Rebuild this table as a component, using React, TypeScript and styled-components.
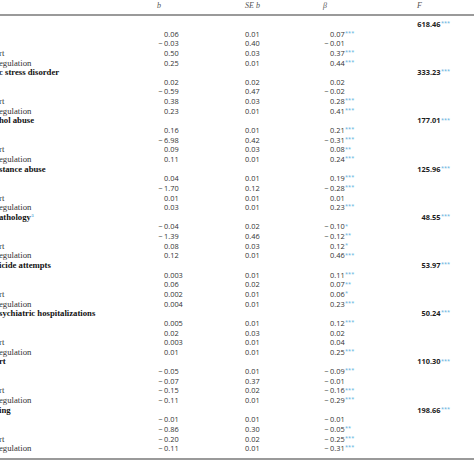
import React from "react";
import styled, { createGlobalStyle } from "styled-components";

const GlobalStyle = createGlobalStyle`
  html, body {
    margin: 0;
    padding: 0;
    background: #ffffff;
  }
  #root {
    width: 474px;
    height: 474px;
    overflow: hidden;
  }
`;

type DataRow = {
  b: string;
  se: string;
  beta: string;
  stars?: string;
};

type Group = {
  label: string;
  sup?: string;
  f: string;
  rows: DataRow[];
};

const groups: Group[] = [
  {
    label: "",
    f: "618.46",
    rows: [
      { b: "0.06", se: "0.01", beta: "0.07", stars: "***" },
      { b: "-0.03", se: "0.40", beta: "-0.01" },
      { b: "0.50", se: "0.03", beta: "0.37", stars: "***" },
      { b: "0.25", se: "0.01", beta: "0.44", stars: "***" },
    ],
  },
  {
    label: "c stress disorder",
    f: "333.23",
    rows: [
      { b: "0.02", se: "0.02", beta: "0.02" },
      { b: "-0.59", se: "0.47", beta: "-0.02" },
      { b: "0.38", se: "0.03", beta: "0.28", stars: "***" },
      { b: "0.23", se: "0.01", beta: "0.41", stars: "***" },
    ],
  },
  {
    label: "hol abuse",
    f: "177.01",
    rows: [
      { b: "0.16", se: "0.01", beta: "0.21", stars: "***" },
      { b: "-6.98", se: "0.42", beta: "-0.31", stars: "***" },
      { b: "0.09", se: "0.03", beta: "0.08", stars: "**" },
      { b: "0.11", se: "0.01", beta: "0.24", stars: "***" },
    ],
  },
  {
    label: "stance abuse",
    f: "125.96",
    rows: [
      { b: "0.04", se: "0.01", beta: "0.19", stars: "***" },
      { b: "-1.70", se: "0.12", beta: "-0.28", stars: "***" },
      { b: "0.01", se: "0.01", beta: "0.01" },
      { b: "0.03", se: "0.01", beta: "0.23", stars: "***" },
    ],
  },
  {
    label: "athology",
    sup: "a",
    f: "48.55",
    rows: [
      { b: "-0.04", se: "0.02", beta: "-0.10", stars: "*" },
      { b: "-1.39", se: "0.46", beta: "-0.12", stars: "**" },
      { b: "0.08", se: "0.03", beta: "0.12", stars: "*" },
      { b: "0.12", se: "0.01", beta: "0.46", stars: "***" },
    ],
  },
  {
    label: "icide attempts",
    f: "53.97",
    rows: [
      { b: "0.003", se: "0.01", beta: "0.11", stars: "***" },
      { b: "0.06", se: "0.02", beta: "0.07", stars: "**" },
      { b: "0.002", se: "0.01", beta: "0.06", stars: "*" },
      { b: "0.004", se: "0.01", beta: "0.23", stars: "***" },
    ],
  },
  {
    label: "sychiatric hospitalizations",
    f: "50.24",
    rows: [
      { b: "0.005", se: "0.01", beta: "0.12", stars: "***" },
      { b: "0.02", se: "0.03", beta: "0.02" },
      { b: "0.003", se: "0.01", beta: "0.04" },
      { b: "0.01", se: "0.01", beta: "0.25", stars: "***" },
    ],
  },
  {
    label: "rt",
    f: "110.30",
    rows: [
      { b: "-0.05", se: "0.01", beta: "-0.09", stars: "***" },
      { b: "-0.07", se: "0.37", beta: "-0.01" },
      { b: "-0.15", se: "0.02", beta: "-0.16", stars: "***" },
      { b: "-0.11", se: "0.01", beta: "-0.29", stars: "***" },
    ],
  },
  {
    label: "ing",
    f: "198.66",
    rows: [
      { b: "-0.01", se: "0.01", beta: "-0.01" },
      { b: "-0.86", se: "0.30", beta: "-0.05", stars: "**" },
      { b: "-0.20", se: "0.02", beta: "-0.25", stars: "***" },
      { b: "-0.11", se: "0.01", beta: "-0.31", stars: "***" },
    ],
  },
];

const subLabels = ["", "", "rt", "egulation"];

const SignedNumber = ({ value, stars }: { value: string; stars?: string }) => {
  const negative = value.startsWith("-");
  return (
    <NumberCell>
      <Sign>{negative ? "\u2212" : ""}</Sign>
      {negative ? value.slice(1) : value}
      {stars && <Stars>{stars}</Stars>}
    </NumberCell>
  );
};

const FValue = ({ value }: { value: string }) => {
  const [whole, frac] = value.split(".");
  return (
    <FCell>
      <FWhole>{whole}</FWhole>.{frac}
      <Stars>***</Stars>
    </FCell>
  );
};

export default function App() {
  return (
    <>
      <GlobalStyle />
      <Table>
        <HeaderRow>
          <span />
          <HeadCell>b</HeadCell>
          <HeadCell>SE b</HeadCell>
          <HeadCell>β</HeadCell>
          <HeadCell $offset={14}>F</HeadCell>
        </HeaderRow>
        <Rule />
        <Body>
          {groups.map((group, gi) => (
            <React.Fragment key={gi}>
              <Row>
                <Label $bold>
                  {group.label}
                  {group.sup && <LabelSup>{group.sup}</LabelSup>}
                </Label>
                <span />
                <span />
                <span />
                <FValue value={group.f} />
              </Row>
              {group.rows.map((row, ri) => (
                <Row key={ri}>
                  <Label>{subLabels[ri]}</Label>
                  <SignedNumber value={row.b} />
                  <PlainNumber>{row.se}</PlainNumber>
                  <SignedNumber value={row.beta} stars={row.stars} />
                  <span />
                </Row>
              ))}
            </React.Fragment>
          ))}
        </Body>
        <Rule />
      </Table>
    </>
  );
}

const Table = styled.div`
  width: 474px;
  display: flex;
  flex-direction: column;
  font-family: "Open Sans", "Noto Sans", sans-serif;
  color: #333333;
`;

const columns = "157px 88px 78px 80px 1fr";

const HeaderRow = styled.div`
  display: grid;
  grid-template-columns: ${columns};
  height: 12px;
  line-height: 12px;
  margin-bottom: 1.5px;
`;

const HeadCell = styled.span<{ $offset?: number }>`
  font-family: "Liberation Serif", "DejaVu Serif", serif;
  font-style: italic;
  font-size: 8px;
  color: #555555;
  padding-left: ${(props) => props.$offset ?? 0}px;
`;

const Rule = styled.div`
  height: 2px;
  width: 100%;
  background: #9a9a9a;
`;

const Body = styled.div`
  display: flex;
  flex-direction: column;
  padding: 4.5px 0 4.3px;
`;

const Row = styled.div`
  display: grid;
  grid-template-columns: ${columns};
  height: 9.65px;
  line-height: 9.65px;
  font-size: 7.4px;
  white-space: nowrap;
`;

const Label = styled.span<{ $bold?: boolean }>`
  font-family: "Liberation Serif", "DejaVu Serif", serif;
  font-size: 8.7px;
  font-weight: ${(props) => (props.$bold ? 700 : 400)};
  color: ${(props) => (props.$bold ? "#111111" : "#333333")};
  margin-left: -1px;
`;

const LabelSup = styled.span`
  font-size: 5.5px;
  font-weight: 400;
  color: #4aa6d6;
  vertical-align: 2.5px;
  line-height: 0;
  margin-left: 0.5px;
`;

const NumberCell = styled.span``;

const Sign = styled.span`
  display: inline-block;
  width: 7px;
  text-align: right;
  padding-right: 1.5px;
  box-sizing: border-box;
`;

const PlainNumber = styled.span``;

const Stars = styled.span`
  font-size: 5.6px;
  font-weight: 400;
  color: #55acdc;
  vertical-align: 1.8px;
  line-height: 0;
  margin-left: 0.4px;
`;

const FCell = styled.span`
  font-weight: 700;
  color: #1e1e1e;
`;

const FWhole = styled.span`
  display: inline-block;
  width: 27px;
  text-align: right;
`;
